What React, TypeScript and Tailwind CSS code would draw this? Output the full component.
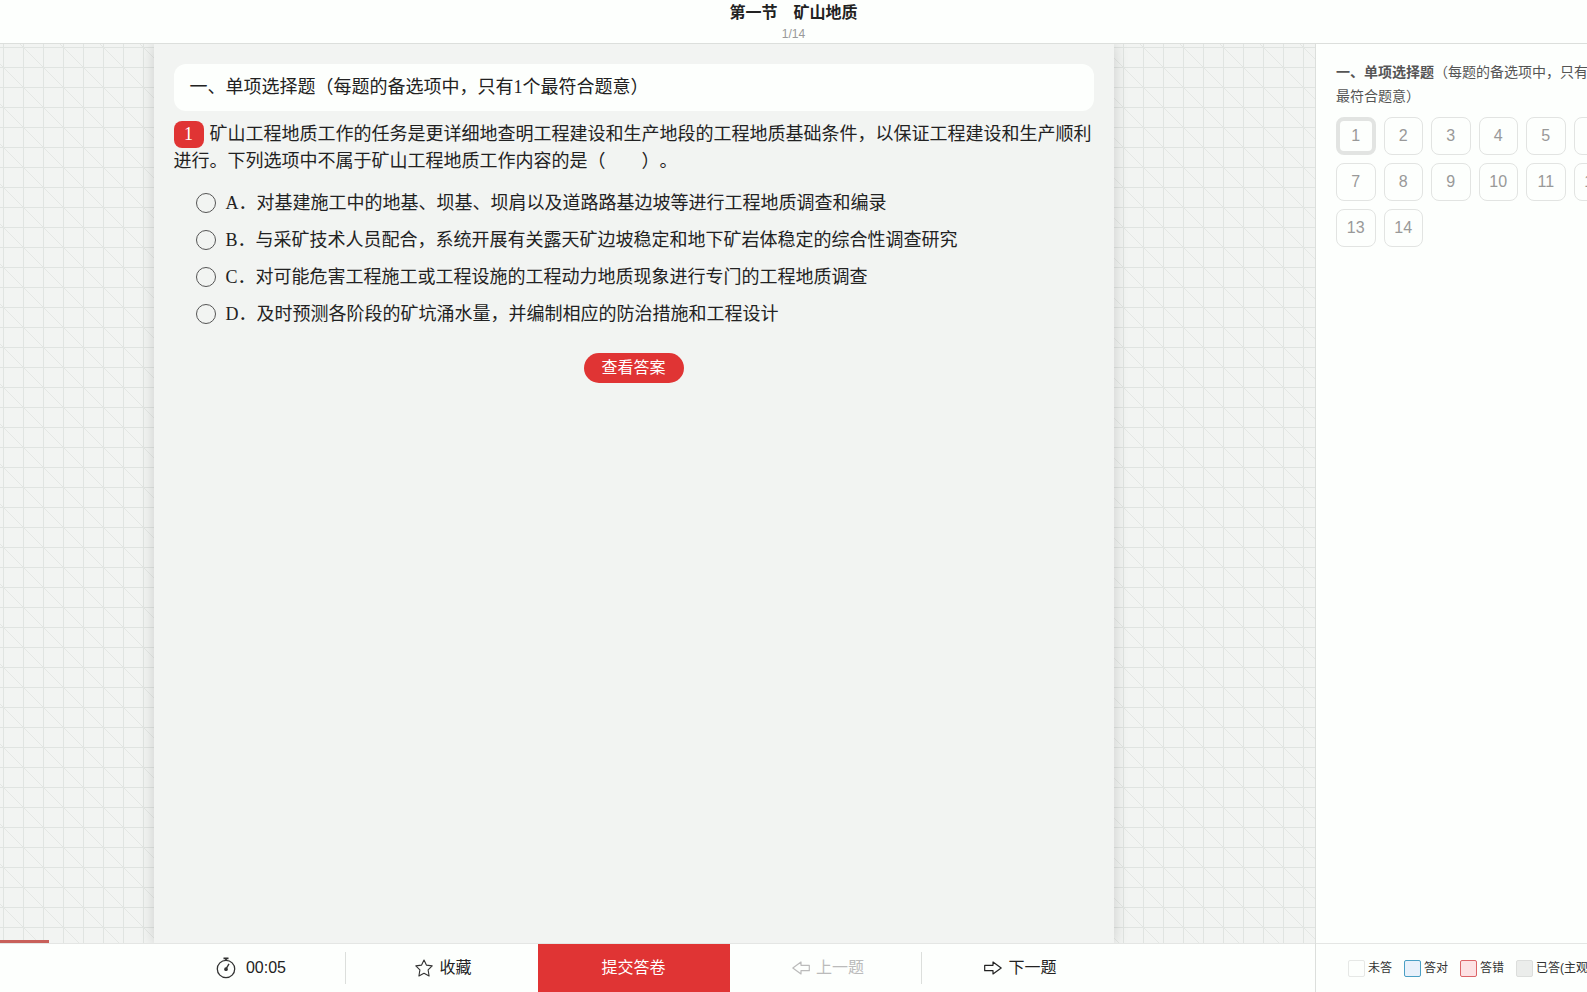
import { useState } from "react";
import clsx from "clsx";

const options = [
  { key: "A", text: "对基建施工中的地基、坝基、坝肩以及道路路基边坡等进行工程地质调查和编录" },
  { key: "B", text: "与采矿技术人员配合，系统开展有关露天矿边坡稳定和地下矿岩体稳定的综合性调查研究" },
  { key: "C", text: "对可能危害工程施工或工程设施的工程动力地质现象进行专门的工程地质调查" },
  { key: "D", text: "及时预测各阶段的矿坑涌水量，并编制相应的防治措施和工程设计" },
];

const legend = [
  { label: "未答", box: "border-[#e6e8e6] bg-[#fdfffd]" },
  { label: "答对", box: "border-[#4a9fc4] bg-[#e8f1fb]" },
  { label: "答错", box: "border-[#dc6468] bg-[#fde2e4]" },
  { label: "已答(主观题)", box: "border-[#dcdedc] bg-[#ebedeb]" },
];

const total = 14;

function TimerIcon() {
  return (
    <svg width="20" height="22" viewBox="0 0 20 22" fill="none" stroke="#333" strokeWidth="1.3">
      <circle cx="10" cy="12" r="8.7" />
      <path d="M7.5 1.4h5M10 1.4v2" strokeWidth="1.8" />
      <path d="M10 12l3-5.2" strokeWidth="1.4" />
      <circle cx="10" cy="12.2" r="1.2" fill="#333" />
    </svg>
  );
}

function StarIcon() {
  return (
    <svg width="18" height="18" viewBox="0 0 18 18" fill="none" stroke="#333" strokeWidth="1.1" strokeLinejoin="round">
      <path d="M9 1l2.4 5.1 5.8.8-4.1 4 1 6.1L9 14.2 3.9 17l1-6.1-4.1-4 5.8-.8z" />
    </svg>
  );
}

function ArrowIcon({ left = false }: { left?: boolean }) {
  return (
    <svg width="18" height="14" viewBox="0 0 18 14" fill="none" stroke="currentColor" strokeWidth="1.2" strokeLinejoin="round">
      {left ? (
        <path d="M.8 7L9 1v3.3h8.300v5.400H9V13z" />
      ) : (
        <path d="M17.200 7L9 1v3.300H.7v5.400H9V13z" />
      )}
    </svg>
  );
}

function Header() {
  return (
    <header className="h-11 shrink-0 border-b border-[#dcdfdc] bg-[#fdfffd] text-center">
      <h1 className="text-base leading-[26px] font-bold text-[#222]">第一节　矿山地质</h1>
      <p className="text-xs leading-4 text-[#999]">1/{total}</p>
    </header>
  );
}

function Question() {
  const [answer, setAnswer] = useState("");

  return (
    <section className="w-[960px] bg-[#f2f4f2] p-5 font-['Liberation_Serif','Noto_Sans_CJK_SC',serif] text-lg leading-[27px] text-[#222] shadow-[0_0_14px_rgba(0,0,0,0.16)] [text-spacing-trim:space-all]">
      <h2 className="rounded-xl bg-[#fdfffd] px-4 py-[10px]">
        一、单项选择题（每题的备选项中，只有1个最符合题意）
      </h2>
      <p className="mt-[10px]">
        <span className="mr-1.5 inline-block w-[30px] rounded-lg bg-[#e03434] text-center align-top text-white">
          1
        </span>
        矿山工程地质工作的任务是更详细地查明工程建设和生产地段的工程地质基础条件，以保证工程建设和生产顺利进行。下列选项中不属于矿山工程地质工作内容的是（　　）。
      </p>
      <ul className="mt-[10px] pl-[22px]">
        {options.map((o) => (
          <li key={o.key}>
            <label className="flex items-start gap-[10px] py-[5px]">
              <input
                type="radio"
                name="answer"
                value={o.key}
                checked={answer === o.key}
                onChange={() => setAnswer(o.key)}
                className="mt-[3px] size-5 shrink-0 appearance-none rounded-full border border-[#555] checked:border-[6px] checked:border-[#e03434]"
              />
              <span>
                {o.key}．{o.text}
              </span>
            </label>
          </li>
        ))}
      </ul>
      <div className="mt-5 text-center">
        <button className="h-[30px] w-[100px] rounded-full bg-[#e03434] text-base leading-[30px] text-white">
          查看答案
        </button>
      </div>
    </section>
  );
}

function AnswerSheet() {
  return (
    <aside className="-mr-[46px] flex w-[318px] shrink-0 flex-col border-l border-[#dcdfdc] bg-[#fdfffd]">
      <div className="grow p-5 pt-4">
        <h3 className="text-sm leading-6 font-normal text-[#555]">
          <b>一、单项选择题</b>（每题的备选项中，只有1个最符合题意）
        </h3>
        <div className="mt-[9px] grid grid-cols-6 gap-2">
          {Array.from({ length: total }, (_, i) => (
            <button
              key={i}
              className={clsx(
                "h-[38px] rounded-lg text-base text-[#999]",
                i === 0 ? "border-4 border-[#e2e4e2]" : "border border-[#e2e4e2]"
              )}
            >
              {i + 1}
            </button>
          ))}
        </div>
      </div>
      <ul className="flex h-[49px] shrink-0 items-center gap-3 border-t border-[#e4e6e4] pl-8 text-xs whitespace-nowrap text-[#333]">
        {legend.map((l) => (
          <li key={l.label} className="flex items-center gap-[3px]">
            <span className={clsx("size-[17px] rounded-xs border", l.box)} />
            {l.label}
          </li>
        ))}
      </ul>
    </aside>
  );
}

function Footer() {
  return (
    <footer className="flex h-[49px] shrink-0 justify-center border-t border-[#e4e6e4] bg-[#fdfffd] pr-12 text-base text-[#222]">
      <div className="grid w-[960px] grid-cols-5 items-center">
        <div className="flex h-8 items-center justify-center gap-[10px] border-r border-[#dcdfdc] pl-1">
          <TimerIcon />
          <time>00:05</time>
        </div>
        <button className="flex h-8 items-center justify-center gap-1.5 pl-1">
          <StarIcon />
          收藏
        </button>
        <button className="h-full bg-[#e03434] text-white">提交答卷</button>
        <button
          disabled
          className="flex h-8 items-center justify-center gap-1.5 border-r border-[#dcdfdc] pl-1.5 text-[#bbb]"
        >
          <ArrowIcon left />
          上一题
        </button>
        <button className="flex h-8 items-center justify-center gap-1.5 pl-1.5">
          <ArrowIcon />
          下一题
        </button>
      </div>
    </footer>
  );
}

export default function App() {
  return (
    <div className="flex h-screen flex-col overflow-hidden bg-[#fdfffd] font-['Liberation_Sans','Noto_Sans_CJK_SC',sans-serif]">
      <Header />
      <div className="flex min-h-0 grow">
        <div className="flex min-w-0 grow flex-col">
          <main className="relative flex min-h-0 grow justify-center overflow-hidden bg-[#f2f4f2] bg-[linear-gradient(45deg,transparent_49%,#e4e7e4_50%,transparent_51%),linear-gradient(90deg,#e0e4e1_1px,transparent_1px),linear-gradient(#e0e4e1_1px,transparent_1px)] bg-[size:40px_40px,20px_20px,20px_20px] bg-[position:3px_23px,3px_3px,3px_3px] pr-12">
            <Question />
            <div className="absolute bottom-0 left-0 h-[3px] w-[49px] bg-[#c8605a]" />
          </main>
          <Footer />
        </div>
        <AnswerSheet />
      </div>
    </div>
  );
}
